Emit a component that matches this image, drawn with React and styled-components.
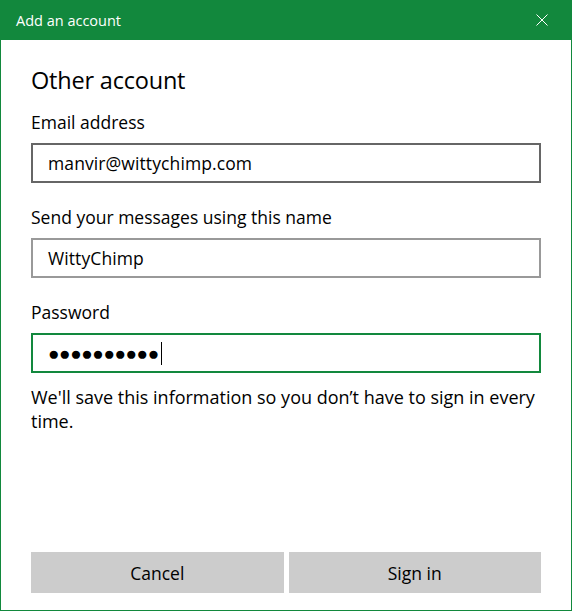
import React from 'react'
import styled, {createGlobalStyle} from 'styled-components'

const GlobalStyle = createGlobalStyle`
    html, body {
        margin: 0;
        padding: 0;
        background: #ffffff;
    }
    * {
        box-sizing: border-box;
    }
`

const fields = [
    {label: 'Email address', value: 'manvir@wittychimp.com', tone: 'strong'},
    {label: 'Send your messages using this name', value: 'WittyChimp', tone: 'soft'},
    {label: 'Password', value: '●●●●●●●●●●', tone: 'focus', secret: true},
]

export default function App(){
    return (
        <>
        <GlobalStyle />
        <Window>
            <TitleBar>
                <Title>Add an account</Title>
                <CloseButton aria-label="Close">
                    <svg width="12" height="12" viewBox="0 0 12 12">
                        <path d="M0.5 0.5 L11.5 11.5 M11.5 0.5 L0.5 11.5" stroke="#ffffff" strokeWidth="1" fill="none" />
                    </svg>
                </CloseButton>
            </TitleBar>
            <Body>
                <Heading>Other account</Heading>
                <Fields>
                    {fields.map(f => (
                        <Field key={f.label}>
                            <Label>{f.label}</Label>
                            <InputBox tone={f.tone}>
                                <InputText secret={f.secret}>{f.value}</InputText>
                                {f.tone === 'focus' && <Caret />}
                            </InputBox>
                        </Field>
                    ))}
                </Fields>
                <Note>We'll save this information so you don’t have to sign in every time.</Note>
                <Spacer />
                <Buttons>
                    <Button>Cancel</Button>
                    <Button>Sign in</Button>
                </Buttons>
            </Body>
        </Window>
        </>
    )
}

const Window = styled.div`
    width: 572px;
    height: 611px;
    display: flex;
    flex-direction: column;
    border: 1px solid #12883d;
    border-top: none;
    background: #ffffff;
    font-family: 'Open Sans', 'Noto Sans', sans-serif;
    color: #000000;
`
const TitleBar = styled.div`
    height: 40px;
    flex: none;
    display: flex;
    align-items: center;
    justify-content: space-between;
    background-color: #12883d;
    padding: 0 24px 0 16px;
    margin: 0 -1px;
`
const Title = styled.span`
    color: #ffffff;
    font-size: 14.5px;
`
const CloseButton = styled.div`
    display: flex;
    align-items: center;
    width: 12px;
    height: 12px;
`
const Body = styled.div`
    flex: 1;
    display: flex;
    flex-direction: column;
    padding: 24px 30px 17px 30px;
`
const Heading = styled.h1`
    margin: 0 0 14px 0;
    font-size: 23.5px;
    font-weight: 400;
    line-height: 32px;
    letter-spacing: -0.2px;
`
const Fields = styled.div`
    display: flex;
    flex-direction: column;
    gap: 22px;
`
const Field = styled.div`
    display: flex;
    flex-direction: column;
`
const Label = styled.div`
    font-size: 17.5px;
    line-height: 24px;
    margin-bottom: 9px;
`
const InputBox = styled.div`
    height: 40px;
    display: flex;
    align-items: center;
    padding: 0 15px;
    border: 2px solid ${p => p.tone === 'focus' ? '#12883d' : p.tone === 'strong' ? '#666666' : '#999999'};
`
const InputText = styled.span`
    font-size: ${p => p.secret ? '19px' : '17.5px'};
    letter-spacing: ${p => p.secret ? '-0.4px' : '0.1px'};
    line-height: 24px;
`
const Caret = styled.span`
    width: 1px;
    height: 23px;
    background: #000000;
    margin-left: 2px;
`
const Note = styled.p`
    margin: 12px 0 0 0;
    font-size: 18px;
    line-height: 24px;
`
const Spacer = styled.div`
    flex: 1;
`
const Buttons = styled.div`
    display: grid;
    grid-template-columns: 1fr 1fr;
    gap: 5px;
`
const Button = styled.button`
    height: 41px;
    border: none;
    background-color: #cccccc;
    font-family: inherit;
    font-size: 17.5px;
    color: #000000;
    padding: 0;
`
